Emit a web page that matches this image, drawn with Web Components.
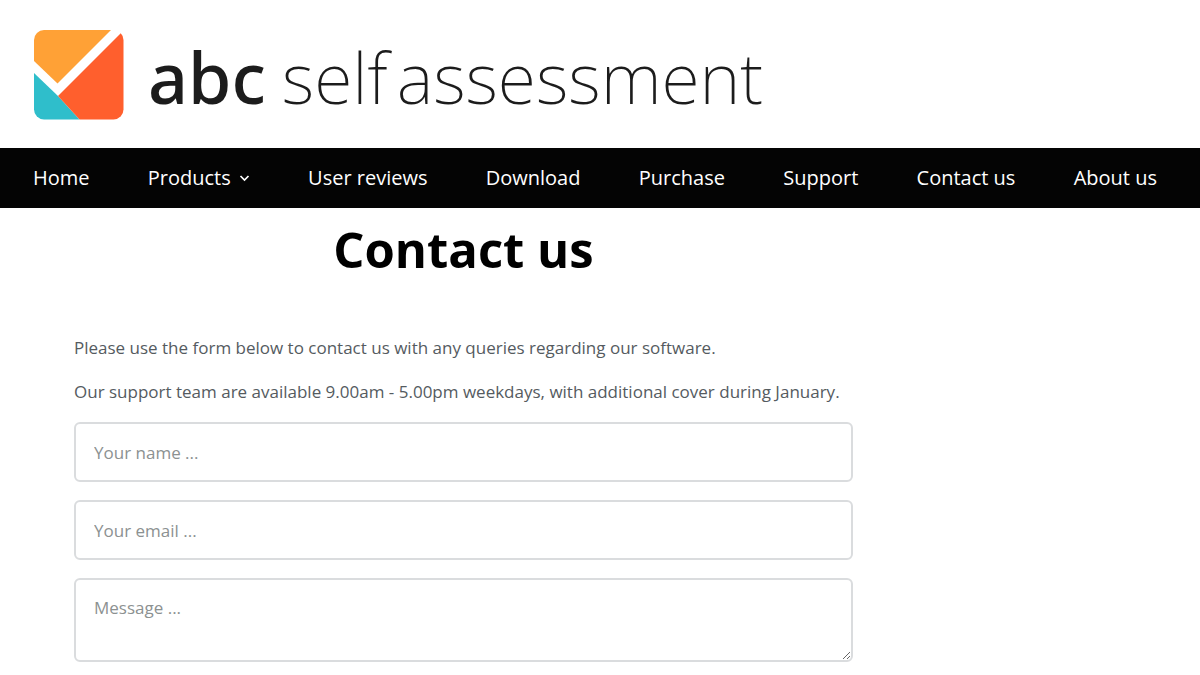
<!DOCTYPE html>
<html lang="en">
<head>
<meta charset="utf-8">
<meta name="viewport" content="width=device-width, initial-scale=1">
<title>Contact us | abc self assessment</title>
<style>
  body { margin: 0; background: #fff; color: #555b5f; font-family: "Open Sans", "Noto Sans", sans-serif; font-size: 17px; }
</style>
</head>
<body>
<abc-header></abc-header>
<abc-nav>
  <abc-nav-item href="#home">Home</abc-nav-item>
  <abc-nav-item href="#products" menu>Products</abc-nav-item>
  <abc-nav-item href="#reviews">User reviews</abc-nav-item>
  <abc-nav-item href="#download">Download</abc-nav-item>
  <abc-nav-item href="#purchase">Purchase</abc-nav-item>
  <abc-nav-item href="#support">Support</abc-nav-item>
  <abc-nav-item href="#contact">Contact us</abc-nav-item>
  <abc-nav-item href="#about">About us</abc-nav-item>
</abc-nav>
<abc-page>
  <span slot="title">Contact us</span>
  <abc-text>Please use the form below to contact us with any queries regarding our software.</abc-text>
  <abc-text>Our support team are available 9.00am - 5.00pm weekdays, with additional cover during January.</abc-text>
  <abc-contact-form></abc-contact-form>
</abc-page>
<script>
const define = (name, html, setup) => customElements.define(name, class extends HTMLElement {
  connectedCallback() {
    if (this.shadowRoot) return;
    this.attachShadow({ mode: "open" }).innerHTML = html;
    if (setup) setup(this, this.shadowRoot);
  }
});

define("abc-logo", `
<style>
  :host { display: block; }
  a { display: flex; gap: 24px; color: #1c1c1c; text-decoration: none; }
  svg { width: 90px; height: 90px; flex: none; }
  .words { display: flex; align-items: baseline; font: 200 70px/94px "Noto Sans", sans-serif; height: 90px; }
  .brand { font-weight: 500; margin-right: 16px; }
  .first { margin-right: 9px; }
</style>
<a href="#home">
  <svg viewBox="0 0 90 90" aria-hidden="true">
    <defs><clipPath id="tile"><rect width="89.500" height="89.500" rx="10"/></clipPath></defs>
    <g clip-path="url(#tile)">
      <path fill="#ffa136" d="M0 0H77L23.500 53.500L0 31Z"/>
      <path fill="#2fbecb" d="M0 43L24 66L46 90H0Z"/>
      <path fill="#ff5f2d" d="M24 66L87 3L90 6V90H46Z"/>
    </g>
  </svg>
  <span class="words"><span class="brand">abc</span><span class="first">self</span><span>assessment</span></span>
</a>`);

define("abc-header", `
<style>
  :host { display: block; }
  header { display: flex; padding: 30px 34px 28px; }
</style>
<header><abc-logo></abc-logo></header>`);

define("abc-nav", `
<style>
  :host { display: block; background: #040404; color: #fff; }
  nav { display: flex; flex-wrap: wrap; justify-content: space-between; column-gap: 40px; padding: 0 43px 0 33px; }
</style>
<nav aria-label="Main"><slot></slot></nav>`);

define("abc-nav-item", `
<style>
  :host { display: block; }
  a { display: flex; align-items: center; gap: 8px; color: inherit; font-size: 20px; line-height: 60px; text-decoration: none; white-space: nowrap; }
  svg { display: none; width: 11px; height: 8px; }
  :host([menu]) svg { display: block; }
</style>
<a><slot></slot><svg viewBox="0 0 11 8" fill="none" stroke="currentColor" stroke-width="1.700" aria-hidden="true"><path d="M1.500 2L5.500 6L9.500 2"/></svg></a>`,
(host, root) => root.querySelector("a").setAttribute("href", host.getAttribute("href")));

define("abc-page", `
<style>
  :host { display: block; }
  main { max-width: 779px; padding: 0 74px 12px; }
  h1 { margin: 0 0 51px; padding-top: 8px; color: #000; font-size: 49px; line-height: 67px; font-weight: 700; text-align: center; }
</style>
<main><h1><slot name="title"></slot></h1><slot></slot></main>`);

define("abc-text", `
<style>
  :host { display: block; }
  p { margin: 0 0 16px; line-height: 28px; }
</style>
<p><slot></slot></p>`);

define("abc-contact-form", `
<style>
  :host { display: block; }
  form { display: grid; gap: 18px; }
</style>
<form>
  <abc-field label="Your name ..." name="name"></abc-field>
  <abc-field label="Your email ..." name="email" type="email"></abc-field>
  <abc-field label="Message ..." name="message" multiline></abc-field>
</form>`);

define("abc-field", `
<style>
  :host { display: block; }
  input, textarea { box-sizing: border-box; display: block; width: 100%; margin: 0; padding: 14px 18px; border: 2px solid #dadcde; border-radius: 6px; background: #fff; color: #555b5f; font: inherit; line-height: 28px; }
  input { height: 60px; }
  textarea { height: 84px; overflow: auto; resize: vertical; }
  ::placeholder { color: #8c9191; opacity: 1; }
</style>`,
(host, root) => {
  const field = document.createElement(host.hasAttribute("multiline") ? "textarea" : "input");
  if (field.localName === "input") field.type = host.getAttribute("type") || "text";
  field.name = host.getAttribute("name");
  field.placeholder = host.getAttribute("label");
  field.setAttribute("aria-label", host.getAttribute("label"));
  root.append(field);
});
</script>
</body>
</html>
